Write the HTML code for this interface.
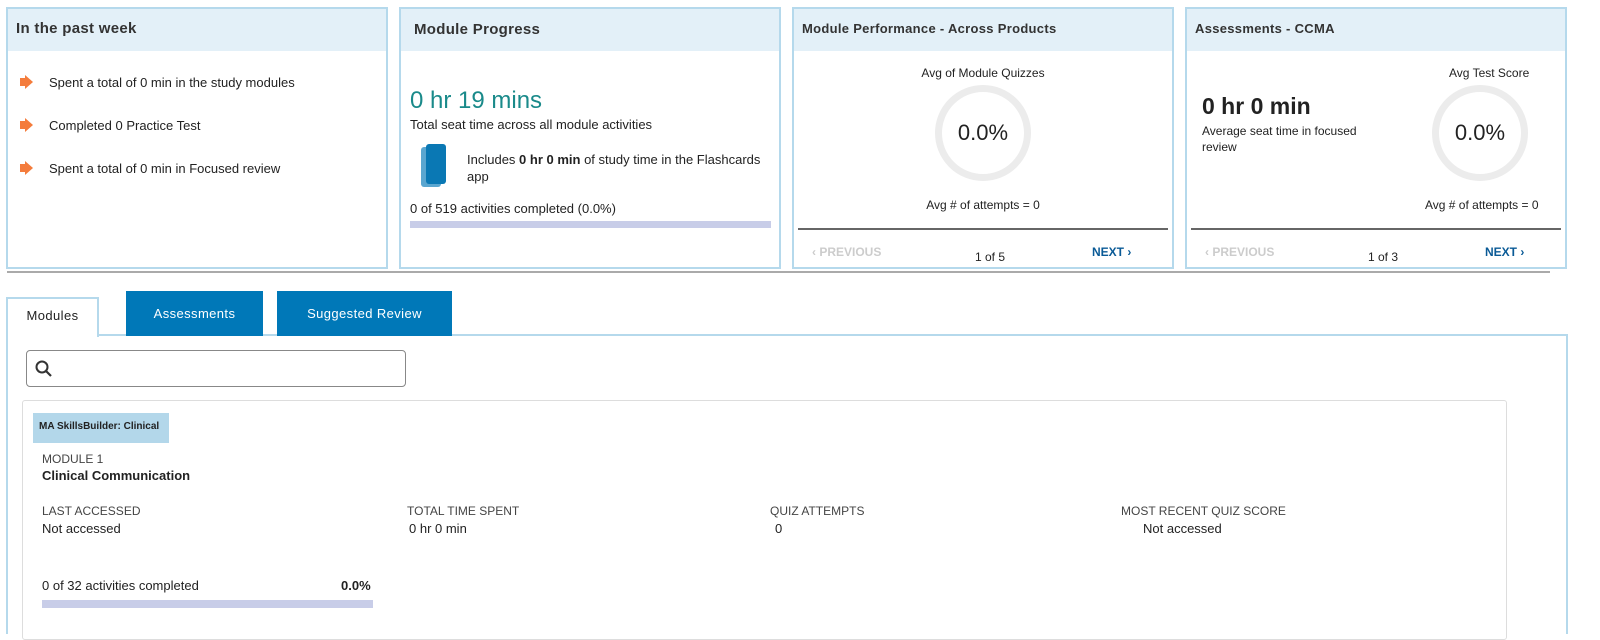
<!DOCTYPE html>
<html><head><style>
*{box-sizing:border-box;margin:0;padding:0}
body{width:1600px;height:626px;overflow:hidden;background:#fff;font-family:"Liberation Sans",sans-serif;color:#222;position:relative}
.a{position:absolute}
.card{position:absolute;top:7px;height:262px;width:382px;border:2px solid #b5d9ec;background:#fff}
.hd{height:42px;background:#e3f0f8;font-weight:bold;font-size:15px;color:#333;padding:11px 8px;letter-spacing:.3px}
.t13{font-size:13px}
.ring{position:absolute;width:96px;height:96px;border:7px solid #ececec;border-radius:50%;font-size:22px;text-align:center;line-height:82px}
.nav{position:absolute;top:219px;left:4px;right:4px;border-top:2px solid #666}
.arr{position:absolute;left:17px;width:0;height:0;border-left:8px solid #f47c3c;border-top:7px solid transparent;border-bottom:7px solid transparent}
.arr:before{content:"";position:absolute;left:-13px;top:-4px;width:6px;height:8px;background:#f47c3c}
</style></head><body>

<div class="card" style="left:6px">
<div class="hd">In the past week</div>
<div class="arr" style="top:66px"></div><div class="a t13" style="left:41px;top:66px">Spent a total of 0 min in the study modules</div>
<div class="arr" style="top:109px"></div><div class="a t13" style="left:41px;top:109px">Completed 0 Practice Test</div>
<div class="arr" style="top:152px"></div><div class="a t13" style="left:41px;top:152px">Spent a total of 0 min in Focused review</div>
</div>

<div class="card" style="left:399px">
<div class="hd" style="padding-left:13px;padding-top:12px">Module Progress</div>
<div class="a" style="left:9px;top:78px;font-size:24px;color:#1a8a8a">0 hr 19 mins</div>
<div class="a t13" style="left:9px;top:108px">Total seat time across all module activities</div>
<svg class="a" style="left:18px;top:134px" width="30" height="50"><rect x="2" y="4" width="20" height="40" rx="3" fill="#5aa6d0"/><rect x="7" y="1" width="20" height="40" rx="3" fill="#0a78b4"/></svg>
<div class="a t13" style="left:66px;top:142px;width:310px;line-height:17px">Includes <b>0 hr 0 min</b> of study time in the Flashcards app</div>
<div class="a t13" style="left:9px;top:192px">0 of 519 activities completed (0.0%)</div>
<div class="a" style="left:9px;top:212px;width:361px;height:7px;background:#c8cde8"></div>
</div>

<div class="card" style="left:792px">
<div class="hd" style="font-size:13px;padding-top:12px">Module Performance - Across Products</div>
<div class="a" style="left:0;right:0;top:57px;text-align:center;font-size:12px">Avg of Module Quizzes</div>
<div class="ring" style="left:141px;top:76px">0.0%</div>
<div class="a" style="left:0;right:0;top:189px;text-align:center;font-size:12px">Avg # of attempts = 0</div>
<div class="nav"></div>
<div class="a" style="left:18px;top:236px;font-size:12px;color:#ccc;font-weight:bold">‹ PREVIOUS</div>
<div class="a" style="left:181px;top:241px;font-size:12px">1 of 5</div>
<div class="a" style="left:298px;top:236px;font-size:12px;color:#0a5a96;font-weight:bold">NEXT ›</div>
</div>

<div class="card" style="left:1185px">
<div class="hd" style="font-size:13px;padding-top:12px">Assessments - CCMA</div>
<div class="a" style="left:0;right:0;top:57px;padding-left:262px;font-size:12px;text-align:left">Avg Test Score</div>
<div class="a" style="left:15px;top:84px;font-size:23px;font-weight:bold;color:#222">0 hr 0 min</div>
<div class="a" style="left:15px;top:114px;font-size:12px;width:175px;line-height:16px">Average seat time in focused review</div>
<div class="ring" style="left:245px;top:76px">0.0%</div>
<div class="a" style="left:238px;top:189px;font-size:12px">Avg # of attempts = 0</div>
<div class="nav"></div>
<div class="a" style="left:18px;top:236px;font-size:12px;color:#ccc;font-weight:bold">‹ PREVIOUS</div>
<div class="a" style="left:181px;top:241px;font-size:12px">1 of 3</div>
<div class="a" style="left:298px;top:236px;font-size:12px;color:#0a5a96;font-weight:bold">NEXT ›</div>
</div>

<div class="a" style="left:7px;top:271px;width:1543px;height:2px;background:#aaa"></div>

<div class="a" style="left:6px;top:334px;width:1562px;height:300px;border-top:2px solid #b5d9ec;border-left:2px solid #b5d9ec;border-right:2px solid #b5d9ec"></div>
<div class="a" style="left:6px;top:297px;width:93px;height:40px;background:#fff;border:2px solid #b5d9ec;border-bottom:none;font-size:13px;padding-top:9px;text-align:center;letter-spacing:.4px">Modules</div>
<div class="a" style="left:126px;top:291px;width:137px;height:45px;background:#0078b8;color:#fff;font-size:13px;text-align:center;padding-top:15px;letter-spacing:.4px">Assessments</div>
<div class="a" style="left:277px;top:291px;width:175px;height:45px;background:#0078b8;color:#fff;font-size:13px;text-align:center;padding-top:15px;letter-spacing:.4px">Suggested Review</div>

<div class="a" style="left:26px;top:350px;width:380px;height:37px;border:1px solid #888;border-radius:4px"></div>
<svg class="a" style="left:34px;top:359px" width="20" height="20"><circle cx="8" cy="8" r="5.5" fill="none" stroke="#333" stroke-width="2"/><line x1="12" y1="12" x2="17" y2="17" stroke="#333" stroke-width="2.2"/></svg>

<div class="a" style="left:22px;top:400px;width:1485px;height:240px;border:1px solid #ddd;border-radius:3px"></div>
<div class="a" style="left:33px;top:413px;width:136px;height:30px;background:#b3d7ea;font-size:10px;font-weight:bold;padding:8px 6px">MA SkillsBuilder: Clinical</div>
<div class="a" style="left:42px;top:452px;font-size:12px;color:#444">MODULE 1</div>
<div class="a" style="left:42px;top:468px;font-size:13px;font-weight:bold">Clinical Communication</div>
<div class="a" style="left:42px;top:504px;font-size:12px;color:#444">LAST ACCESSED</div>
<div class="a" style="left:42px;top:521px;font-size:13px">Not accessed</div>
<div class="a" style="left:407px;top:504px;font-size:12px;color:#444">TOTAL TIME SPENT</div>
<div class="a" style="left:409px;top:521px;font-size:13px">0 hr 0 min</div>
<div class="a" style="left:770px;top:504px;font-size:12px;color:#444">QUIZ ATTEMPTS</div>
<div class="a" style="left:775px;top:521px;font-size:13px">0</div>
<div class="a" style="left:1121px;top:504px;font-size:12px;color:#444">MOST RECENT QUIZ SCORE</div>
<div class="a" style="left:1143px;top:521px;font-size:13px">Not accessed</div>
<div class="a" style="left:42px;top:578px;font-size:13px">0 of 32 activities completed</div>
<div class="a" style="left:341px;top:578px;font-size:13px;font-weight:bold">0.0%</div>
<div class="a" style="left:42px;top:600px;width:331px;height:8px;background:#c8cde8"></div>
</body></html>
